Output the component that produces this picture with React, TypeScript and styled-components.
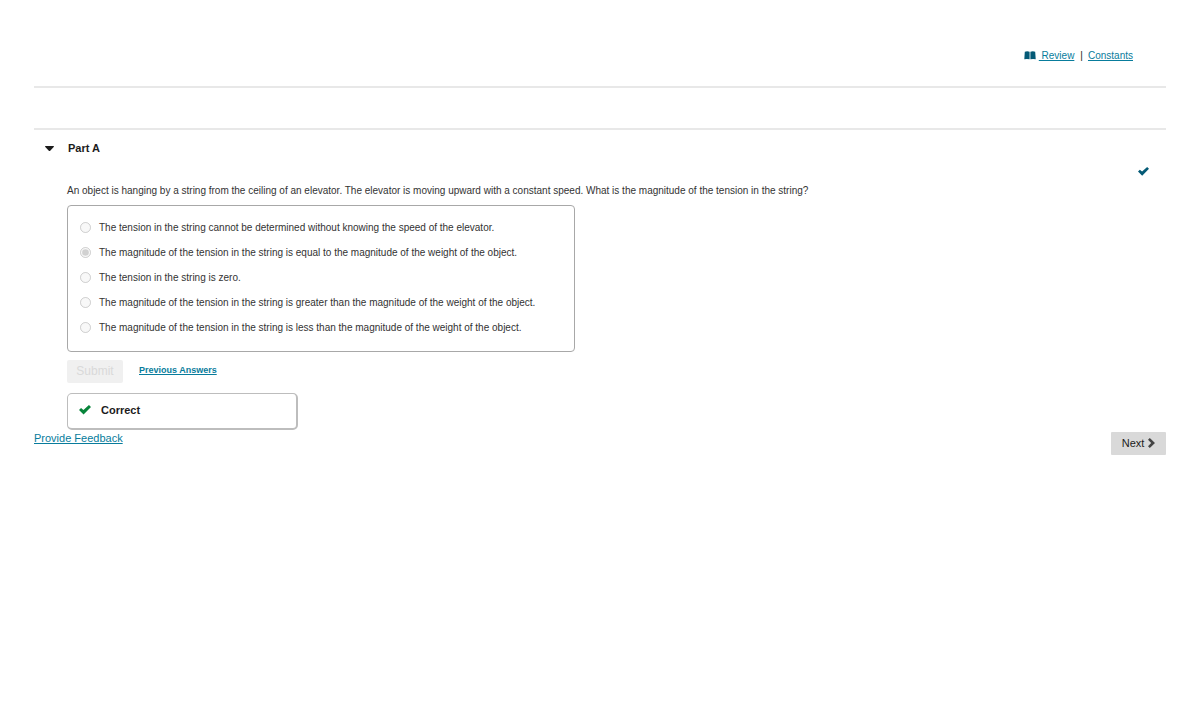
import React from "react";
import styled, { createGlobalStyle } from "styled-components";

const GlobalStyle = createGlobalStyle`
  *, *::before, *::after { box-sizing: border-box; }
  body {
    margin: 0;
    background: #fff;
    color: #333;
    font: 10px/16px "Liberation Sans", Arial, sans-serif;
  }
`;

const Page = styled.div`
  padding: 48px 34px 0;
`;

const TopBar = styled.header`
  display: flex;
  justify-content: flex-end;
  align-items: center;
  height: 38px;
  padding: 0 33px 22px 0;
`;

const BookIcon = styled.svg`
  margin: 0 3px 2px 0;
`;

const Separator = styled.span`
  margin: 0 5px 0 6px;
  color: #222;
`;

const Link = styled.a<{ $bold?: boolean; $size?: number }>`
  color: #087c9c;
  font-size: ${(p) => p.$size ?? 10}px;
  font-weight: ${(p) => (p.$bold ? 700 : 400)};
  text-decoration: underline;
  white-space: pre;
`;

const Rule = styled.hr`
  height: 2px;
  margin: 0;
  border: 0;
  background: #e8e8e8;
`;

const Part = styled.section`
  margin-top: 40px;
`;

const PartHeader = styled.button`
  display: flex;
  align-items: center;
  gap: 14px;
  margin: 10px 0 0 11px;
  padding: 0;
  border: 0;
  background: none;
  color: #1c1c1c;
  font: bold 11px/16px "Liberation Sans", Arial, sans-serif;
`;

const StatusRow = styled.div`
  display: flex;
  justify-content: flex-end;
  height: 27px;
  padding: 11px 17px 0 0;
`;

const PartBody = styled.div`
  padding-left: 33px;
`;

const Question = styled.p`
  margin: 0 0 6px;
`;

const Choices = styled.fieldset`
  display: flex;
  flex-direction: column;
  gap: 10px;
  width: 508px;
  max-width: 100%;
  margin: 0;
  padding: 14px 12px 16px;
  border: 1px solid #a8a8a8;
  border-radius: 4px;
  line-height: 15px;
`;

const Choice = styled.label`
  display: flex;
  align-items: center;
  gap: 8px;
`;

const Radio = styled.input`
  flex: none;
  width: 11px;
  height: 11px;
  margin: 0;
`;

const Actions = styled.div`
  display: flex;
  align-items: flex-start;
  gap: 16px;
  margin-top: 8px;
  line-height: 20px;
`;

const Submit = styled.button`
  width: 56px;
  height: 23px;
  padding: 0;
  border: 0;
  border-radius: 2px;
  background: #f0f0f0;
  color: #d9d9d9;
  font: 12px/23px "Liberation Sans", Arial, sans-serif;
`;

const Result = styled.div`
  display: flex;
  align-items: center;
  gap: 10px;
  width: 231px;
  height: 37px;
  margin-top: 10px;
  padding: 0 11px 2px;
  border: 1px solid #bdbdbd;
  border-right-width: 2px;
  border-bottom-width: 2px;
  border-radius: 5px;
  color: #1c1c1c;
  font-size: 11px;
  font-weight: 700;
`;

const Footer = styled.footer`
  display: flex;
  justify-content: space-between;
  align-items: flex-start;
`;

const Next = styled.button`
  display: flex;
  justify-content: center;
  align-items: center;
  gap: 4px;
  width: 55px;
  height: 23px;
  margin-top: 2px;
  padding: 0 0 1px;
  border: 0;
  border-radius: 1px;
  background: #d9d9d9;
  color: #1c1c1c;
  font: 11px/16px "Liberation Sans", Arial, sans-serif;
`;

const Book = () => (
  <BookIcon width="12" height="9" viewBox="0 0 12 9" fill="#045a76" aria-hidden="true">
    <path d="M.8 .7Q3.2 0 5.6 .7V8.3Q3 7.6 .3 8.3Z" />
    <path d="M11.2 .7Q8.8 0 6.4 .7V8.3Q9 7.6 11.7 8.3Z" />
  </BookIcon>
);

const CheckIcon = ({ color, size }: { color: string; size: number }) => (
  <svg width={size} height={size * 0.8} viewBox="0 0 10 8" fill={color} aria-hidden="true">
    <path d="M0 4.2L1.7 2.4L3.7 4.2L8.3 .1L10 1.7L3.8 8Z" />
  </svg>
);

const CaretIcon = () => (
  <svg width="9" height="5" viewBox="0 0 9 5" fill="#1c1c1c" aria-hidden="true">
    <path d="M.4 0H8.6Q9.2 .5 8.7 1L5.2 4.7Q4.5 5.2 3.8 4.7L.3 1Q-.2 .5 .4 0Z" />
  </svg>
);

const ChevronIcon = () => (
  <svg width="7" height="10" viewBox="0 0 7 10" fill="#444" aria-hidden="true">
    <path d="M0 1.8L1.8 0L7 5L1.8 10L0 8.2L3.2 5Z" />
  </svg>
);

const choices = [
  "The tension in the string cannot be determined without knowing the speed of the elevator.",
  "The magnitude of the tension in the string is equal to the magnitude of the weight of the object.",
  "The tension in the string is zero.",
  "The magnitude of the tension in the string is greater than the magnitude of the weight of the object.",
  "The magnitude of the tension in the string is less than the magnitude of the weight of the object.",
];

export default function App() {
  return (
    <>
      <GlobalStyle />
      <Page>
        <TopBar>
          <Book />
          <Link href="#review">{" Review"}</Link>
          <Separator>|</Separator>
          <Link href="#constants">Constants</Link>
        </TopBar>
        <Rule />
        <Part>
          <Rule />
          <PartHeader type="button" aria-expanded="true">
            <CaretIcon />
            Part A
          </PartHeader>
          <StatusRow>
            <CheckIcon color="#045a76" size={11} />
          </StatusRow>
          <PartBody>
            <Question id="question">
              An object is hanging by a string from the ceiling of an elevator. The elevator is
              moving upward with a constant speed. What is the magnitude of the tension in the
              string?
            </Question>
            <Choices aria-labelledby="question">
              {choices.map((text, i) => (
                <Choice key={text}>
                  <Radio type="radio" name="answer" defaultChecked={i === 1} disabled />
                  {text}
                </Choice>
              ))}
            </Choices>
            <Actions>
              <Submit type="button" disabled>
                Submit
              </Submit>
              <Link href="#answers" $bold $size={9}>
                Previous Answers
              </Link>
            </Actions>
            <Result role="status">
              <CheckIcon color="#07843a" size={12} />
              Correct
            </Result>
          </PartBody>
        </Part>
        <Footer>
          <Link href="#feedback" $size={11}>
            Provide Feedback
          </Link>
          <Next type="button">
            Next
            <ChevronIcon />
          </Next>
        </Footer>
      </Page>
    </>
  );
}
